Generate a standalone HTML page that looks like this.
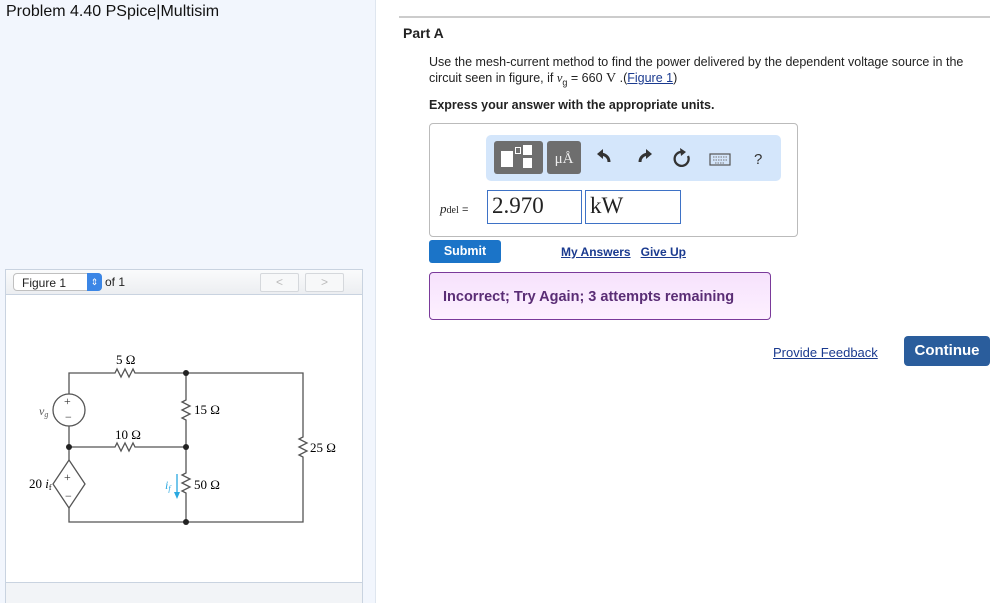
<!DOCTYPE html>
<html><head><meta charset="utf-8"><style>
*{margin:0;padding:0;box-sizing:border-box}
body{width:1006px;height:603px;overflow:hidden;background:#fff;font-family:"Liberation Sans",Arial,sans-serif;position:relative;color:#222}
.abs{position:absolute}
a{color:#1a3a8f}
</style></head><body>
<div class="abs" style="left:0;top:0;width:376px;height:603px;background:#f2f6fd;border-right:1px solid #dfe6ef"></div>
<div class="abs" style="left:6px;top:3px;font-size:16px;color:#111">Problem 4.40 PSpice|Multisim</div>

<div class="abs" style="left:5px;top:269px;width:358px;height:334px;background:#fff;border:1px solid #c9d3e0"></div>
<div class="abs" style="left:6px;top:270px;width:356px;height:25px;background:linear-gradient(#fafbfc,#eceef1);border-bottom:1px solid #c9d3e0"></div>
<div class="abs" style="left:13px;top:273px;width:89px;height:18px;background:#fff;border:1px solid #c0c0c0;border-radius:4px;font-size:12px;padding:2px 0 0 8px">Figure 1</div>
<div class="abs" style="left:87px;top:273px;width:15px;height:18px;background:#3b86e6;border-radius:0 4px 4px 0;color:#fff;font-size:9px;text-align:center;line-height:18px">⇕</div>
<div class="abs" style="left:105px;top:275px;font-size:12px">of 1</div>
<div class="abs" style="left:260px;top:273px;width:39px;height:19px;border:1px solid #d5d8dc;border-radius:2px;background:#f7f8f9;color:#bbb;font-size:12px;text-align:center;line-height:17px">&lt;</div>
<div class="abs" style="left:305px;top:273px;width:39px;height:19px;border:1px solid #d5d8dc;border-radius:2px;background:#f7f8f9;color:#bbb;font-size:12px;text-align:center;line-height:17px">&gt;</div>
<div class="abs" style="left:6px;top:582px;width:356px;height:21px;background:#f2f4f7;border-top:1px solid #c9d3e0"></div>

<svg class="abs" style="left:0;top:0" width="376" height="603" font-family="Liberation Serif,serif" font-size="13">
<g stroke="#555" stroke-width="1.3" fill="none">
<path d="M69 394V373H115l2-4 4 8 4-8 4 8 4-8 2 4H303V437l-4 2 8 4-8 4 8 4-8 4 4 2V522H69V508"/>
<path d="M69 426V460"/>
<path d="M69 447H115l2-4 4 8 4-8 4 8 4-8 2 4H186"/>
<path d="M186 373V400l-4 2 8 4-8 4 8 4-8 4 4 2V473l-4 2 8 4-8 4 8 4-8 4 4 2V522"/>
<circle cx="69" cy="410" r="16"/>
<path d="M69 460L85 484L69 508L53 484Z"/>
</g>
<g fill="#222"><circle cx="186" cy="373" r="3"/><circle cx="186" cy="447" r="3"/><circle cx="69" cy="447" r="3"/><circle cx="186" cy="522" r="3"/></g>
<g fill="#333" font-size="12"><text x="64" y="405">+</text><text x="65" y="421">−</text><text x="64" y="481">+</text><text x="65" y="500">−</text></g>
<text x="116" y="364">5 Ω</text><text x="115" y="439">10 Ω</text>
<text x="194" y="414">15 Ω</text><text x="194" y="489">50 Ω</text><text x="310" y="452">25 Ω</text>
<text x="39" y="415" font-style="italic" font-size="12" fill="#555">v<tspan font-size="8" dy="2">g</tspan></text>
<text x="29" y="488">20 <tspan font-style="italic">i</tspan><tspan font-size="8" dy="2">f</tspan></text>
<text x="165" y="489" font-style="italic" font-size="12" fill="#29a8e0">i<tspan font-size="8" dy="2">f</tspan></text>
<path d="M177 474V495" stroke="#29a8e0" stroke-width="1.3"/><path d="M174 492L177 499L180 492Z" fill="#29a8e0"/>
</svg>

<div class="abs" style="left:399px;top:16px;width:591px;height:2px;background:#ccc"></div>
<div class="abs" style="left:403px;top:25px;font-size:14px;color:#222;font-weight:bold;-webkit-text-stroke:0">Part A</div>
<div class="abs" style="left:429px;top:54px;width:570px;font-size:12.5px;line-height:16px">Use the mesh-current method to find the power delivered by the dependent voltage source in the circuit seen in figure, if <i style="font-family:'Liberation Serif',serif">v</i><sub style="font-size:9px">g</sub> = 660 <span style="font-family:'Liberation Serif',serif;font-size:14px">V</span> .(<a href="#">Figure 1</a>)</div>
<div class="abs" style="left:429px;top:98px;font-size:12.5px;font-weight:bold">Express your answer with the appropriate units.</div>

<div class="abs" style="left:429px;top:123px;width:369px;height:114px;border:1px solid #bbb;border-radius:4px"></div>
<div class="abs" style="left:486px;top:135px;width:295px;height:46px;background:#d4e6fb;border-radius:5px"></div>
<div class="abs" style="left:494px;top:141px;width:49px;height:33px;background:#6e6e6e;border-radius:3px"></div>
<div class="abs" style="left:501px;top:151px;width:12px;height:16px;background:#fff"></div>
<div class="abs" style="left:515px;top:147px;width:6px;height:7px;border:1px solid #fff"></div>
<div class="abs" style="left:523px;top:145px;width:9px;height:10px;background:#fff"></div>
<div class="abs" style="left:523px;top:158px;width:9px;height:10px;background:#fff"></div>
<div class="abs" style="left:547px;top:141px;width:34px;height:33px;background:#6e6e6e;border-radius:3px;color:#eee;font-family:'Liberation Serif',serif;font-size:15px;text-align:center;line-height:36px">μÅ</div>
<svg class="abs" style="left:595px;top:146px" width="175" height="24">
<path d="M14 16c0-5-4-8-9-8" stroke="#333" stroke-width="3" fill="none"/><path d="M2 8l6-5v10z" fill="#333"/>
<path d="M45 16c0-5 4-8 9-8" stroke="#333" stroke-width="3" fill="none"/><path d="M57 8l-6-5v10z" fill="#333"/>
<path d="M88 6a7 7 0 1 0 5 4" stroke="#333" stroke-width="2.3" fill="none"/><path d="M85 2l6 4-5 4z" fill="#333"/>
<rect x="115" y="8" width="20" height="11" fill="none" stroke="#555" stroke-width="1.2"/><path d="M118 11h14M118 14h14M120 17h10" stroke="#777" stroke-dasharray="1.5 1"/>
<text x="159" y="18" font-family="Liberation Sans" font-size="15" fill="#333">?</text>
</svg>
<div class="abs" style="left:440px;top:201px;font-family:'Liberation Serif',serif;font-size:13px"><i>p</i><span style="font-size:10px">del</span> <span style="font-family:'Liberation Sans';font-size:11px">=</span></div>
<div class="abs" style="left:487px;top:190px;width:95px;height:34px;border:1px solid #3e72c6;font-family:'Liberation Serif',serif;font-size:23px;padding:2px 0 0 4px">2.970</div>
<div class="abs" style="left:585px;top:190px;width:96px;height:34px;border:1px solid #3e72c6;font-family:'Liberation Serif',serif;font-size:23px;padding:2px 0 0 4px">kW</div>

<div class="abs" style="left:429px;top:240px;width:72px;height:23px;background:#1b74c8;border-radius:3px;color:#fff;font-weight:bold;font-size:12.5px;text-align:center;line-height:23px">Submit</div>
<div class="abs" style="left:561px;top:245px;font-size:12px;font-weight:bold"><a href="#">My Answers</a>&nbsp;&nbsp; <a href="#">Give Up</a></div>

<div class="abs" style="left:429px;top:272px;width:342px;height:48px;background:linear-gradient(#f6e2fc,#fdf0ff);border:1px solid #7a3a9a;border-radius:4px;color:#5a2d75;font-weight:bold;font-size:14.5px;padding-top:16px;padding-left:13px">Incorrect; Try Again; 3 attempts remaining</div>

<div class="abs" style="left:773px;top:345px;font-size:13px"><a href="#">Provide Feedback</a></div>
<div class="abs" style="left:904px;top:336px;width:86px;height:30px;background:#2a5d9c;border-radius:4px;color:#fff;font-size:15px;text-align:center;line-height:30px;font-weight:bold">Continue</div>
</body></html>
